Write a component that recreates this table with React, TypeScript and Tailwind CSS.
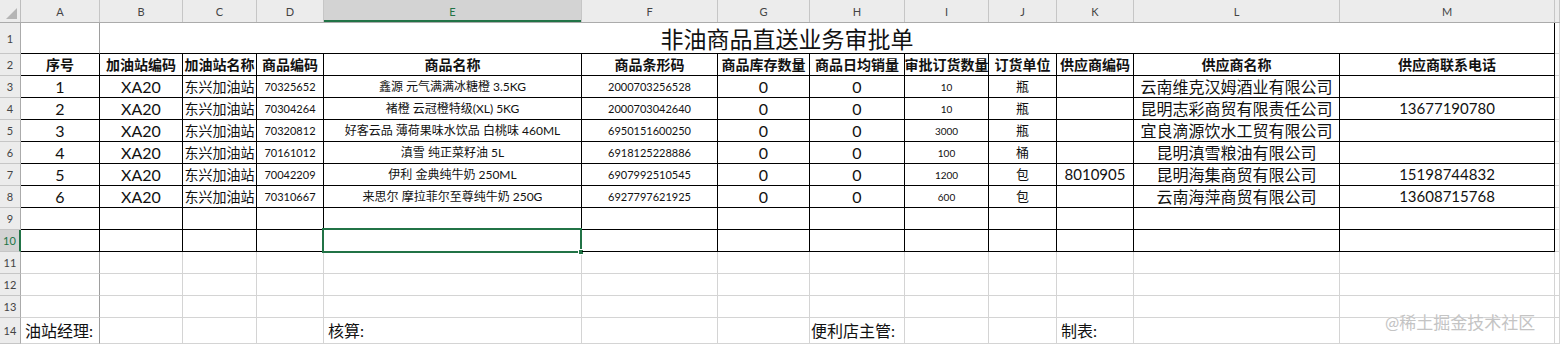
import React from 'react';

const COLS = ['A', 'B', 'C', 'D', 'E', 'F', 'G', 'H', 'I', 'J', 'K', 'L', 'M', ''];

const GRID =
  'grid grid-cols-[21px_79px_83px_74px_67px_258px_136px_92px_95px_84px_68px_77px_206px_215px_5px]';

const FONT = "font-['Lato','Noto_Sans_CJK_SC',sans-serif]";

interface Item {
  code: string;
  name: string;
  barcode: string;
  qty: string;
  unit: string;
  supplierCode?: string;
  supplier: string;
  phone?: string;
}

const ITEMS: Item[] = [
  { code: '70325652', name: '鑫源 元气满满冰糖橙 3.5KG', barcode: '2000703256528', qty: '10', unit: '瓶', supplier: '云南维克汉姆酒业有限公司' },
  { code: '70304264', name: '褚橙 云冠橙特级(XL) 5KG', barcode: '2000703042640', qty: '10', unit: '瓶', supplier: '昆明志彩商贸有限责任公司', phone: '13677190780' },
  { code: '70320812', name: '好客云品 薄荷果味水饮品 白桃味 460ML', barcode: '6950151600250', qty: '3000', unit: '瓶', supplier: '宜良滴源饮水工贸有限公司' },
  { code: '70161012', name: '滇雪 纯正菜籽油 5L', barcode: '6918125228886', qty: '100', unit: '桶', supplier: '昆明滇雪粮油有限公司' },
  { code: '70042209', name: '伊利 金典纯牛奶 250ML', barcode: '6907992510545', qty: '1200', unit: '包', supplierCode: '8010905', supplier: '昆明海集商贸有限公司', phone: '15198744832' },
  { code: '70310667', name: '来思尔 摩拉菲尔至尊纯牛奶 250G', barcode: '6927797621925', qty: '600', unit: '包', supplier: '云南海萍商贸有限公司', phone: '13608715768' },
];

const HEADERS = [
  '序号', '加油站编码', '加油站名称', '商品编码', '商品名称', '商品条形码', '商品库存数量',
  '商品日均销量', '审批订货数量', '订货单位', '供应商编码', '供应商名称', '供应商联系电话',
];

function RowHead({ n, active, h }: { n: string; active?: boolean; h: string }) {
  return (
    <div
      className={`${h} flex items-center justify-center border-b border-b-[#c6c6c6] text-[11px] leading-none ${
        active
          ? 'bg-[#d3d3d3] text-[#217346] border-r-2 border-r-[#217346]'
          : 'bg-[#ececec] text-[#444] border-r border-r-[#ababab]'
      }`}
    >
      {n}
    </div>
  );
}

function Cell({
  children,
  black,
  className = '',
}: {
  children?: React.ReactNode;
  black?: boolean;
  className?: string;
}) {
  return (
    <div
      className={`flex items-center justify-center overflow-visible whitespace-nowrap border-r border-b leading-none text-[#111] ${
        black ? 'border-black' : 'border-[#d4d4d4]'
      } ${className}`}
    >
      {children}
    </div>
  );
}

export default function App() {
  return (
    <div className={`relative w-[1560px] h-[346px] overflow-hidden bg-white ${FONT}`}>
      {/* column letters */}
      <div className={`${GRID} h-[23px] bg-[#ececec] border-b border-[#ababab]`}>
        <div className="relative border-r border-[#bdbdbd]">
          <div className="absolute right-[3px] bottom-[3px] w-0 h-0 border-l-[11px] border-l-transparent border-b-[11px] border-b-[#b5b5b5]" />
        </div>
        {COLS.map((c, i) => (
          <div
            key={i}
            className={`flex items-center justify-center text-[11px] leading-none border-r border-[#c6c6c6] ${
              c === 'E' ? 'bg-[#d3d3d3] text-[#217346] shadow-[inset_0_-2px_0_#217346]' : 'text-[#444]'
            }`}
          >
            {c}
          </div>
        ))}
      </div>

      {/* row 1: title */}
      <div className={`${GRID} h-[31px]`}>
        <RowHead n="1" h="h-[31px]" />
        <Cell black className="border-r-[#9e9e9e]" />
        <div className="col-span-12 flex items-end justify-center pb-[2px] pr-[80px] border-r border-b border-black text-[23px] leading-none text-[#111]">
          非油商品直送业务审批单
        </div>
        <Cell />
      </div>

      {/* row 2: headings */}
      <div className={`${GRID} h-[22px]`}>
        <RowHead n="2" h="h-[22px]" />
        {HEADERS.map((t) => (
          <Cell key={t} black className="text-[14px] font-bold">
            {t}
          </Cell>
        ))}
        <Cell />
      </div>

      {/* rows 3-8: data */}
      {ITEMS.map((it, i) => (
        <div key={it.code} className={`${GRID} h-[22px]`}>
          <RowHead n={String(i + 3)} h="h-[22px]" />
          <Cell black className="text-[16px]">{i + 1}</Cell>
          <Cell black className="text-[16px]">XA20</Cell>
          <Cell black className="text-[14px]">东兴加油站</Cell>
          <Cell black className="text-[11px]">{it.code}</Cell>
          <Cell black className="text-[12px]">{it.name}</Cell>
          <Cell black className="text-[11px]">{it.barcode}</Cell>
          <Cell black className="text-[16px]">0</Cell>
          <Cell black className="text-[16px]">0</Cell>
          <Cell black className="text-[10px]">{it.qty}</Cell>
          <Cell black className="text-[13px]">{it.unit}</Cell>
          <Cell black className="text-[15px]">{it.supplierCode}</Cell>
          <Cell black className="text-[16px]">{it.supplier}</Cell>
          <Cell black className="text-[15px]">{it.phone}</Cell>
          <Cell />
        </div>
      ))}

      {/* rows 9-10: empty bordered */}
      {['9', '10'].map((n) => (
        <div key={n} className={`${GRID} h-[22px]`}>
          <RowHead n={n} h="h-[22px]" active={n === '10'} />
          {HEADERS.map((t, j) => (
            <div key={t} className="relative flex border-r border-b border-black">
              {n === '10' && j === 4 && (
                <div className="absolute -left-[2px] -top-[2px] w-[260px] h-[25px] border-2 border-[#217346]">
                  <div className="absolute -right-[4px] -bottom-[4px] w-[6px] h-[6px] bg-[#217346] border border-white" />
                </div>
              )}
            </div>
          ))}
          <Cell />
        </div>
      ))}

      {/* rows 11-13: plain gridlines */}
      {['11', '12', '13'].map((n) => (
        <div key={n} className={`${GRID} h-[22px]`}>
          <RowHead n={n} h="h-[22px]" />
          <Cell className="border-r-[#9e9e9e]" />
          {COLS.slice(1).map((c, j) => (
            <Cell key={j} />
          ))}
        </div>
      ))}

      {/* row 14: signatures */}
      <div className={`${GRID} h-[26px]`}>
        <RowHead n="14" h="h-[26px]" />
        <Cell className="border-r-[#9e9e9e] !justify-start !items-end pl-[4px] pb-[4px] text-[16px] overflow-visible">
          油站经理:
        </Cell>
        <Cell />
        <Cell />
        <Cell />
        <Cell className="!justify-start !items-end pl-[4px] pb-[4px] text-[16px]">核算:</Cell>
        <Cell />
        <Cell />
        <Cell className="!justify-start !items-end pl-[1px] pb-[4px] text-[16px]">便利店主管:</Cell>
        <Cell />
        <Cell />
        <Cell className="!justify-start !items-end pl-[4px] pb-[4px] text-[16px]">制表:</Cell>
        <Cell />
        <Cell />
        <Cell />
      </div>

      <div className="absolute left-[1385px] top-[314px] text-[17px] leading-none text-[#c4c4c4] [text-shadow:0_0_1px_#fff]">
        @稀土掘金技术社区
      </div>
    </div>
  );
}
